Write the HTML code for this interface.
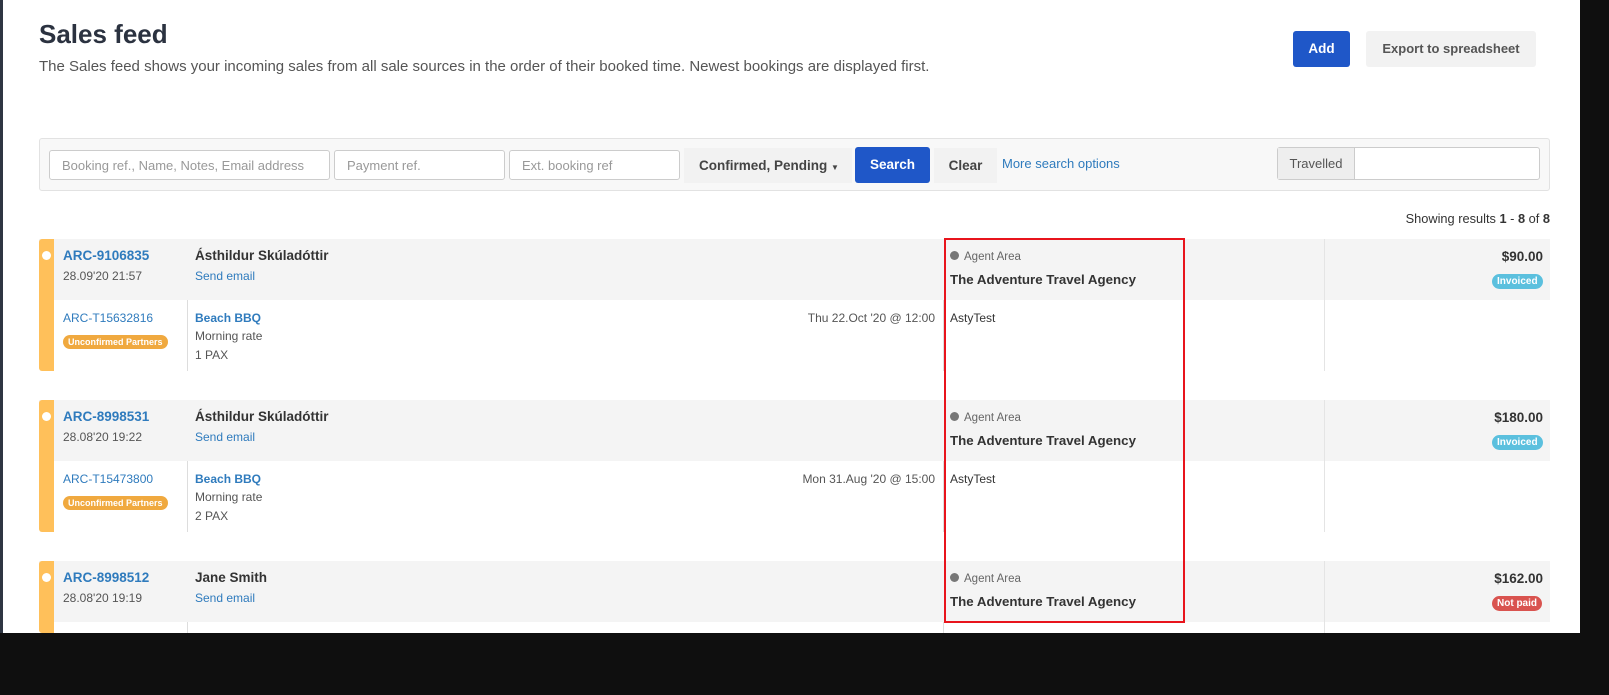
<!DOCTYPE html>
<html><head><meta charset="utf-8"><style>
*{box-sizing:border-box;margin:0;padding:0}
body{width:1609px;height:695px;background:#0f0f0f;font-family:"Liberation Sans",sans-serif;position:relative;overflow:hidden;color:#333}
.a{position:absolute;white-space:nowrap}
#page{position:absolute;left:0;top:0;width:1580px;height:633px;background:#fff}
#strip{position:absolute;left:0;top:0;width:3px;height:633px;background:#2e3542}
.inp{position:absolute;top:150px;height:30px;border:1px solid #ccc;border-radius:3px;background:#fff;color:#999;font-size:13px;padding:7px 12px}
.head{position:absolute;left:39px;width:1511px;height:61px;background:#f4f4f4}
.bar{position:absolute;left:39px;width:15px;background:#ffc05a;border-radius:3px 0 0 3px}
.dot{position:absolute;left:42px;width:9px;height:9px;border-radius:50%;background:#fff}
.blue{color:#2f7bbd}
.f12{font-size:12px}
.vl{position:absolute;width:1px;background:#ddd}
.pill{position:absolute;font-size:9px;font-weight:bold;color:#fff;border-radius:8px;padding:2px 5px}
</style></head><body>
<div id="page"></div><div id="strip"></div>
<div class="a" style="left:39px;top:19px;font-size:26px;font-weight:bold;color:#2b3240">Sales feed</div>
<div class="a" style="left:39px;top:58px;font-size:15px;color:#555">The Sales feed shows your incoming sales from all sale sources in the order of their booked time. Newest bookings are displayed first.</div>
<div class="a" style="left:1293px;top:31px;width:57px;height:36px;background:#1f57c8;border-radius:3px;color:#fff;font-weight:bold;font-size:13.5px;text-align:center;line-height:36px">Add</div>
<div class="a" style="left:1366px;top:31px;width:170px;height:36px;background:#f2f2f2;border-radius:3px;color:#555;font-weight:bold;font-size:13px;text-align:center;line-height:36px">Export to spreadsheet</div>

<div class="a" style="left:39px;top:138px;width:1511px;height:53px;background:#f8f8f8;border:1px solid #e2e2e2;border-radius:3px"></div>
<div class="inp" style="left:49px;width:281px">Booking ref., Name, Notes, Email address</div>
<div class="inp" style="left:334px;width:171px">Payment ref.</div>
<div class="inp" style="left:509px;width:171px">Ext. booking ref</div>
<div class="a" style="left:684px;top:148px;width:168px;height:35px;background:#f2f2f2;font-size:13.5px;font-weight:bold;color:#444;line-height:35px;padding-left:15px">Confirmed, Pending <span style="font-size:8px">▼</span></div>
<div class="a" style="left:855px;top:147px;width:75px;height:36px;background:#1f57c8;border-radius:3px;color:#fff;font-weight:bold;font-size:13.5px;text-align:center;line-height:36px">Search</div>
<div class="a" style="left:934px;top:148px;width:63px;height:35px;background:#f2f2f2;font-size:13.5px;font-weight:bold;color:#444;line-height:35px;text-align:center">Clear</div>
<div class="a blue" style="left:1002px;top:156px;font-size:13px">More search options</div>
<div class="a" style="left:1277px;top:147px;width:263px;height:33px;border:1px solid #ccc;border-radius:3px;background:#fff"></div>
<div class="a" style="left:1278px;top:148px;width:77px;height:31px;background:#eee;border-right:1px solid #ccc;font-size:13px;color:#555;line-height:31px;text-align:center">Travelled</div>
<div class="a" style="left:1550px;top:211px;font-size:12.8px;color:#333;transform:translateX(-100%)">Showing results <b>1</b> - <b>8</b> of <b>8</b></div>

<!-- row 1 -->
<div class="head" style="top:239px"></div>
<div class="bar" style="top:239px;height:132px"></div><div class="dot" style="top:251px"></div>
<div class="vl" style="left:187px;top:300px;height:71px"></div>
<div class="vl" style="left:943px;top:300px;height:71px"></div>
<div class="vl" style="left:1324px;top:239px;height:132px;background:#e4e4e4"></div>
<div class="a blue" style="left:63px;top:248px;font-size:13.5px;font-weight:bold">ARC-9106835</div>
<div class="a f12" style="left:63px;top:269px;color:#555">28.09'20 21:57</div>
<div class="a" style="left:195px;top:248px;font-size:13.5px;font-weight:bold;color:#333">Ásthildur Skúladóttir</div>
<div class="a blue f12" style="left:195px;top:269px">Send email</div>
<div class="a blue f12" style="left:63px;top:311px">ARC-T15632816</div>
<div class="pill" style="left:63px;top:335px;background:#f0a93f">Unconfirmed Partners</div>
<div class="a blue f12" style="left:195px;top:311px;font-weight:bold">Beach BBQ</div>
<div class="a f12" style="left:195px;top:329px;color:#555">Morning rate</div>
<div class="a f12" style="left:195px;top:348px;color:#555">1 PAX</div>
<div class="a f12" style="left:935px;top:311px;color:#555;transform:translateX(-100%)">Thu 22.Oct '20 @ 12:00</div>
<div class="a f12" style="left:950px;top:311px;color:#333">AstyTest</div>
<div class="a" style="left:950px;top:251px;font-size:11.5px;color:#666"><span style="display:inline-block;width:9px;height:9px;border-radius:50%;background:#777;margin-right:5px"></span>Agent Area</div>
<div class="a" style="left:950px;top:272px;font-size:13.3px;font-weight:bold;color:#333">The Adventure Travel Agency</div>
<div class="a" style="left:1543px;top:249px;font-size:13.5px;font-weight:bold;transform:translateX(-100%)">$90.00</div>
<div class="pill" style="left:1492px;top:274px;background:#5bc0de;font-size:10px">Invoiced</div>

<!-- row 2 -->
<div class="head" style="top:400px"></div>
<div class="bar" style="top:400px;height:132px"></div><div class="dot" style="top:412px"></div>
<div class="vl" style="left:187px;top:461px;height:71px"></div>
<div class="vl" style="left:943px;top:461px;height:71px"></div>
<div class="vl" style="left:1324px;top:400px;height:132px;background:#e4e4e4"></div>
<div class="a blue" style="left:63px;top:409px;font-size:13.5px;font-weight:bold">ARC-8998531</div>
<div class="a f12" style="left:63px;top:430px;color:#555">28.08'20 19:22</div>
<div class="a" style="left:195px;top:409px;font-size:13.5px;font-weight:bold;color:#333">Ásthildur Skúladóttir</div>
<div class="a blue f12" style="left:195px;top:430px">Send email</div>
<div class="a blue f12" style="left:63px;top:472px">ARC-T15473800</div>
<div class="pill" style="left:63px;top:496px;background:#f0a93f">Unconfirmed Partners</div>
<div class="a blue f12" style="left:195px;top:472px;font-weight:bold">Beach BBQ</div>
<div class="a f12" style="left:195px;top:490px;color:#555">Morning rate</div>
<div class="a f12" style="left:195px;top:509px;color:#555">2 PAX</div>
<div class="a f12" style="left:935px;top:472px;color:#555;transform:translateX(-100%)">Mon 31.Aug '20 @ 15:00</div>
<div class="a f12" style="left:950px;top:472px;color:#333">AstyTest</div>
<div class="a" style="left:950px;top:412px;font-size:11.5px;color:#666"><span style="display:inline-block;width:9px;height:9px;border-radius:50%;background:#777;margin-right:5px"></span>Agent Area</div>
<div class="a" style="left:950px;top:433px;font-size:13.3px;font-weight:bold;color:#333">The Adventure Travel Agency</div>
<div class="a" style="left:1543px;top:410px;font-size:13.5px;font-weight:bold;transform:translateX(-100%)">$180.00</div>
<div class="pill" style="left:1492px;top:435px;background:#5bc0de;font-size:10px">Invoiced</div>

<!-- row 3 -->
<div class="head" style="top:561px"></div>
<div class="bar" style="top:561px;height:72px"></div><div class="dot" style="top:573px"></div>
<div class="vl" style="left:187px;top:622px;height:11px"></div>
<div class="vl" style="left:943px;top:622px;height:11px"></div>
<div class="vl" style="left:1324px;top:561px;height:72px;background:#e4e4e4"></div>
<div class="a blue" style="left:63px;top:570px;font-size:13.5px;font-weight:bold">ARC-8998512</div>
<div class="a f12" style="left:63px;top:591px;color:#555">28.08'20 19:19</div>
<div class="a" style="left:195px;top:570px;font-size:13.5px;font-weight:bold;color:#333">Jane Smith</div>
<div class="a blue f12" style="left:195px;top:591px">Send email</div>
<div class="a" style="left:950px;top:573px;font-size:11.5px;color:#666"><span style="display:inline-block;width:9px;height:9px;border-radius:50%;background:#777;margin-right:5px"></span>Agent Area</div>
<div class="a" style="left:950px;top:594px;font-size:13.3px;font-weight:bold;color:#333">The Adventure Travel Agency</div>
<div class="a" style="left:1543px;top:571px;font-size:13.5px;font-weight:bold;transform:translateX(-100%)">$162.00</div>
<div class="pill" style="left:1492px;top:596px;background:#d9534f;font-size:10px">Not paid</div>

<div class="a" style="left:944px;top:238px;width:241px;height:385px;border:2px solid #e8141c"></div>
</body></html>
